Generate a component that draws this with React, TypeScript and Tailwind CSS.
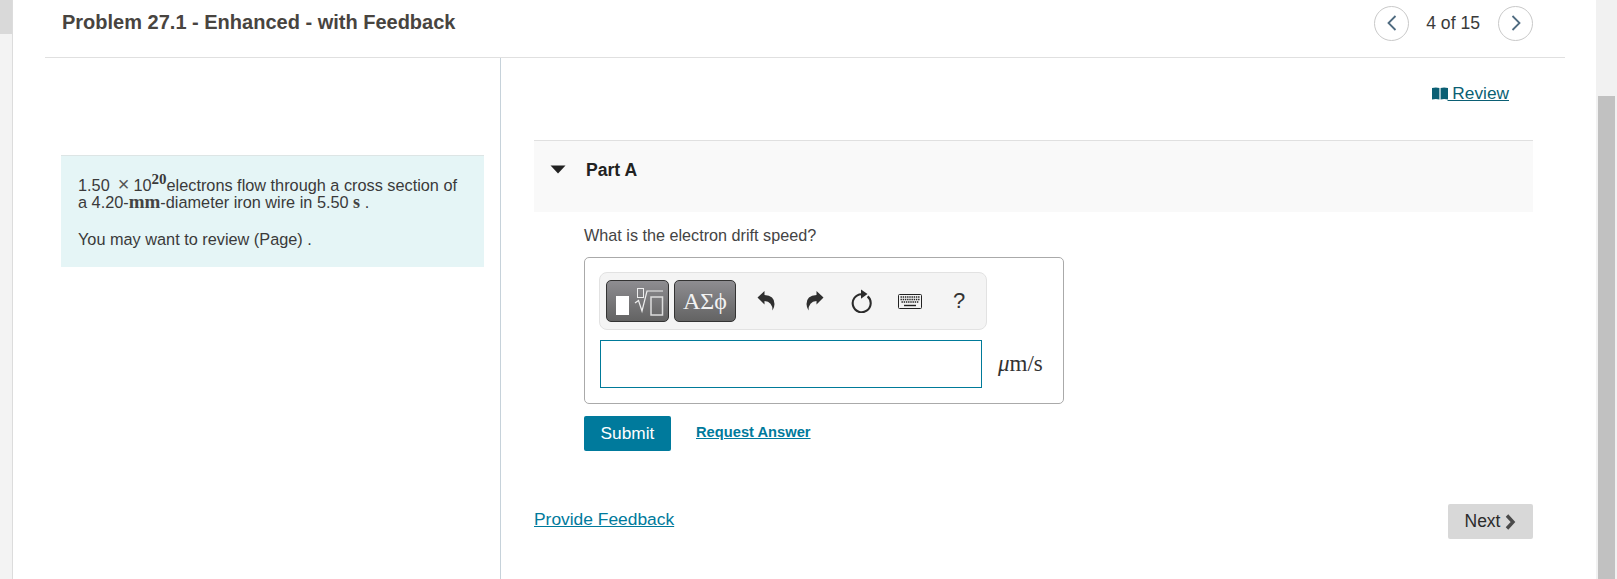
const sans = "font-['Liberation_Sans',Arial,sans-serif]";
const serif = "font-['Liberation_Serif','Times_New_Roman',serif]";

function Chevron({ dir }: { dir: "left" | "right" }) {
  return (
    <svg width="10" height="16" viewBox="0 0 10 16">
      <path
        d={dir === "left" ? "M8.5 1 L1.5 8 L8.5 15" : "M1.5 1 L8.5 8 L1.5 15"}
        fill="none"
        stroke="#4f6b80"
        strokeWidth="1.8"
      />
    </svg>
  );
}

function Book() {
  return (
    <svg width="16" height="13" viewBox="0 0 16 13" className="inline-block">
      <path d="M0 1 Q4 0 7.4 1 V12.5 Q4 11.5 0 12.5 Z" fill="#0b5f74" />
      <path d="M8.6 1 Q12 0 16 1 V12.5 Q12 11.5 8.6 12.5 Z" fill="#0b5f74" />
    </svg>
  );
}

function MathTemplate() {
  return (
    <svg width="63" height="42" viewBox="0 0 63 42">
      <rect x="9" y="15" width="13" height="19" fill="#fff" />
      <rect x="30.5" y="7.5" width="6" height="9" fill="none" stroke="#eee" strokeWidth="1" />
      <path d="M28 22 L31.5 19.5 L35 30 L40 10 H56" fill="none" stroke="#eee" strokeWidth="1.2" />
      <rect x="44" y="16" width="11.5" height="18" fill="none" stroke="#ddd" strokeWidth="1.5" />
    </svg>
  );
}

function Undo({ flip }: { flip?: boolean }) {
  return (
    <svg width="18" height="22" viewBox="0 0 18 22" className={flip ? "-scale-x-100" : ""}>
      <path d="M0.5 7.5 L7.5 1 V5 Q17.5 5.5 17.5 14 Q17.5 17 15.5 20.5 Q15.5 11.5 7.5 11 V14.5 Z" fill="#2f2f2f" />
    </svg>
  );
}

function Refresh() {
  return (
    <svg width="22" height="24" viewBox="0 0 22 24">
      <path d="M16.6 7.4 A9 9 0 1 1 10.4 5.2" fill="none" stroke="#2b2b2b" strokeWidth="2.1" />
      <path d="M10 0.5 L16.5 5 L10 9.8 Z" fill="#2b2b2b" />
    </svg>
  );
}

function Keyboard() {
  return (
    <svg width="24" height="15" viewBox="0 0 24 15">
      <rect x="0.5" y="0.5" width="23" height="14" rx="1" fill="#f4f4f4" stroke="#222" />
      <path d="M2.5 3 H21.5 M2.5 5.5 H21.5 M3.5 8 H20.5" stroke="#222" strokeWidth="1.3" strokeDasharray="1.4 0.8" fill="none" />
      <path d="M6 11.5 H18" stroke="#222" strokeWidth="1.4" />
    </svg>
  );
}

export default function App() {
  return (
    <div className={`flex h-[579px] w-[1617px] overflow-hidden bg-white ${sans} text-[#333]`}>
      <div className="w-[13px] shrink-0 border-r border-[#dcdcdc] bg-[#f3f3f3]">
        <div className="h-[34px] bg-[#d9d9d9]" />
      </div>

      <div className="flex w-[1583px] flex-col pl-[32px] pr-[31px]">
        <div className="flex h-[58px] shrink-0 items-start justify-between border-b border-[#e0e0e0] pl-[17px] pr-[32px]">
          <h1 className="mt-[9px] text-[20px] font-bold leading-[26px] text-[#48443f]">
            Problem 27.1 - Enhanced - with Feedback
          </h1>
          <div className="mt-[5px] flex items-center">
            <div className="flex h-[35px] w-[35px] items-center justify-center rounded-full border border-[#c9c9c9]">
              <Chevron dir="left" />
            </div>
            <span className="ml-[17px] mr-[18px] text-[17.6px] leading-[36px] text-[#3a3a3a]">4 of 15</span>
            <div className="flex h-[35px] w-[35px] items-center justify-center rounded-full border border-[#c9c9c9]">
              <Chevron dir="right" />
            </div>
          </div>
        </div>

        <div className="flex min-h-0 flex-1">
          <div className="w-[456px] shrink-0 border-r border-[#c6d2da] pl-[16px] pt-[97px]">
            <div className="h-[112px] w-[423px] border-t border-[#dde5e5] bg-[#e5f5f6] pl-[17px] pt-[19px] text-[16.3px] leading-[18px] text-[#3a3a3a]">
              <div className="flex h-[18px] items-baseline whitespace-pre">
                <span>1.50</span>
                <span className="ml-[8px] text-[20px] leading-[18px] text-[#555]">×</span>
                <span className="ml-[4px]">10</span>
                <span className={`${serif} relative top-[-7px] text-[15px] font-bold leading-none`}>20</span>
                <span>electrons flow through a cross section of</span>
              </div>
              <div className="h-[18px] whitespace-pre">
                a 4.20-<span className={`${serif} text-[19px] font-bold leading-[16px] text-[#444]`}>mm</span>-diameter iron wire in 5.50 <span className={`${serif} text-[18px] font-bold leading-[16px] text-[#444]`}>s</span> .
              </div>
              <div className="mt-[19px]">You may want to review (Page) .</div>
            </div>
          </div>

          <div className="flex min-w-0 flex-1 flex-col pl-[33px] pr-[32px]">
            <div className="mt-[24px] flex h-[22px] items-center justify-end pr-[24px]">
              <a className="flex items-center text-[17.3px] leading-[20px] text-[#0b5f74] underline">
                <Book />
                <span className="whitespace-pre">{" Review"}</span>
              </a>
            </div>

            <div className="mt-[36px] flex h-[72px] border-t border-[#e0e0e0] bg-[#f9f9f9]">
              <svg width="16" height="9" viewBox="0 0 16 9" className="ml-[16px] mt-[24px]">
                <path d="M0.5 0.5 H15.5 L8 8.5 Z" fill="#222" />
              </svg>
              <div className="ml-[20px] mt-[19px] text-[17.6px] font-bold leading-[20px] text-[#222]">Part A</div>
            </div>

            <div className="ml-[50px] flex flex-col">
              <p className="mt-[13px] text-[16.2px] leading-[20px] text-[#444]">What is the electron drift speed?</p>

              <div className="mt-[12px] h-[147px] w-[480px] rounded-[5px] border border-[#aaa] pl-[14px] pt-[14px]">
                <div className="flex h-[58px] w-[388px] items-center rounded-[8px] border border-[#e2e2e2] bg-[#f4f4f4] pl-[6px]">
                  <div className="h-[42px] w-[63px] rounded-[5px] border border-[#333] bg-gradient-to-b from-[#8e8d91] to-[#636363]">
                    <MathTemplate />
                  </div>
                  <div className={`ml-[5px] flex h-[42px] w-[62px] items-center justify-center rounded-[5px] border border-[#333] bg-gradient-to-b from-[#8e8d91] to-[#636363] ${serif} text-[24px] text-[#f2f2f2]`}>
                    ΑΣϕ
                  </div>
                  <span className="ml-[21px] flex"><Undo /></span>
                  <span className="ml-[31px] flex"><Undo flip /></span>
                  <span className="ml-[27px] flex"><Refresh /></span>
                  <span className="ml-[25px] flex"><Keyboard /></span>
                  <span className="ml-[31px] text-[22px] leading-[22px] text-[#333]">?</span>
                </div>
                <div className="ml-[1px] mt-[10px] flex items-center">
                  <div className="h-[48px] w-[382px] border border-[#007a99] bg-white" />
                  <span className={`ml-[16px] mt-[-1px] ${serif} text-[23px] leading-[24px] text-[#333]`}><i>μ</i>m/s</span>
                </div>
              </div>

              <div className="mt-[12px] flex items-center">
                <button className="h-[35px] w-[87px] rounded-[2px] bg-[#007a9c] text-[17.3px] text-white">Submit</button>
                <a className="mb-[3px] ml-[25px] text-[14.7px] font-bold leading-[18px] text-[#007a9c] underline">Request Answer</a>
              </div>
            </div>

            <div className="mt-[53px] flex items-start justify-between">
              <a className="mt-[4px] text-[17.4px] leading-[22px] text-[#007a9c] underline">Provide Feedback</a>
              <div className="flex h-[35px] w-[85px] items-center justify-center gap-[5px] rounded-[2px] bg-[#d8d8d8] text-[17.5px] text-[#2b2b2b]">
                Next
                <svg width="11" height="16" viewBox="0 0 11 16">
                  <path d="M2 1.5 L8 8 L2 14.5" fill="none" stroke="#4a4a4a" strokeWidth="3.4" />
                </svg>
              </div>
            </div>
          </div>
        </div>
      </div>

      <div className="w-[21px] shrink-0 bg-[#f1f1f1] px-[2px] pt-[96px]">
        <div className="h-[483px] bg-[#c1c1c1]" />
      </div>
    </div>
  );
}
